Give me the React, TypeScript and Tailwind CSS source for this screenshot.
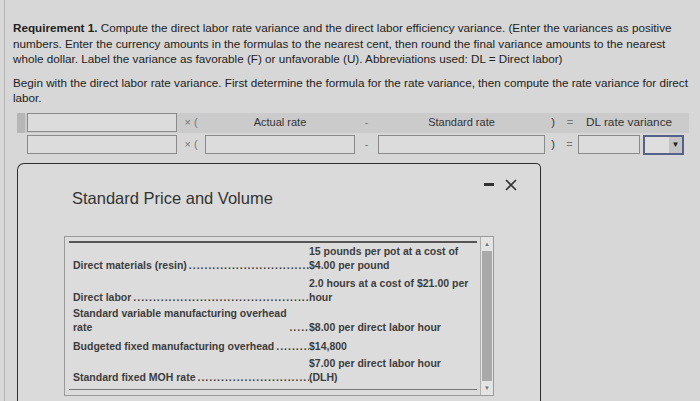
import React from 'react';

const Dots: React.FC = () => (
  <span className="flex-1 overflow-hidden whitespace-nowrap tracking-[1px] ml-[2px]">
    ..................................................................................
  </span>
);

const InputBox: React.FC<{ w: string }> = ({ w }) => (
  <div className={`${w} h-[19px] border border-[#8a8a8a] bg-[#dcdcdc]`} />
);

const App: React.FC = () => {
  return (
    <div
      className="w-[700px] h-[401px] overflow-hidden bg-[#d7d7d7] text-[#222]"
      style={{ fontFamily: '"Liberation Sans", Arial, sans-serif' }}
    >
      <div className="h-full ml-[4px] border-l border-[#b5b5b5] pl-[8px] pt-[20px]">
        <p className="text-[11.7px] leading-[15.5px]">
          <span className="font-bold">Requirement 1.</span> Compute the direct labor rate variance and the direct labor efficiency variance. (Enter the variances as positive
          <br />
          numbers. Enter the currency amounts in the formulas to the nearest cent, then round the final variance amounts to the nearest
          <br />
          whole dollar. Label the variance as favorable (F) or unfavorable (U). Abbreviations used: DL = Direct labor)
        </p>
        <p className="text-[11.7px] leading-[15px] mt-[8px]">
          Begin with the direct labor rate variance. First determine the formula for the rate variance, then compute the rate variance for direct
          <br />
          labor.
        </p>

        {/* formula rows */}
        <div className="mt-[8px] ml-[4px] w-[672px] text-[11px] text-[#333]">
          <div className="flex items-center h-[20px] bg-[#cbcbcb]">
            <div className="w-[8px] h-full bg-[#b6b6b6]" />
            <div className="ml-[2px]">
              <InputBox w="w-[150px]" />
            </div>
            <span className="w-[28px] text-center text-[#777]">× (</span>
            <span className="w-[150px] text-center">Actual rate</span>
            <span className="w-[23px] text-center text-[#777]">-</span>
            <span className="w-[167px] text-center">Standard rate</span>
            <span className="w-[16px] text-center">)</span>
            <span className="w-[18px] text-center text-[#777]">=</span>
            <span className="ml-[7px] text-[11.8px]">DL rate variance</span>
          </div>
          <div className="flex items-center h-[20px] mt-[2px]">
            <div className="w-[8px]" />
            <div className="ml-[2px]">
              <InputBox w="w-[150px]" />
            </div>
            <span className="w-[28px] text-center text-[#777]">× (</span>
            <InputBox w="w-[150px]" />
            <span className="w-[23px] text-center text-[#777]">-</span>
            <InputBox w="w-[167px]" />
            <span className="w-[16px] text-center">)</span>
            <span className="w-[17px] text-center text-[#777]">=</span>
            <InputBox w="w-[62px]" />
            <div className="ml-[3px] w-[41px] h-[20px] border-2 border-[#56608a] bg-[#dedede] flex justify-end">
              <div className="w-[13px] h-full bg-[#c4c4c4] flex items-center justify-center text-[8px] text-[#222]">
                ▼
              </div>
            </div>
          </div>
        </div>

        {/* dialog */}
        <div className="mt-[8px] ml-[4px] w-[524px] h-[260px] border-[1.5px] border-b-0 border-[#2e2e2e] rounded-tl-[7px] rounded-tr-[5px] bg-[#dadada]">
          <div className="flex justify-between items-start">
            <h2 className="pl-[54px] pt-[22px] text-[16.5px] text-[#333]">Standard Price and Volume</h2>
            <div className="flex items-center gap-[10px] pt-[14px] pr-[22px] text-[#333]">
              <div className="w-[10px] h-[3px] bg-[#333]" />
              <svg width="14" height="14" viewBox="0 0 14 14">
                <path d="M2 2 L12 12 M12 2 L2 12" stroke="#333" strokeWidth="1.6" />
              </svg>
            </div>
          </div>

          <div className="mt-[26px] ml-[46px] w-[430px] h-[160px] border border-[#9a9a9a] bg-[#dcdcdc] flex">
            <div className="flex-1 pl-[4px] pr-[3px] pt-[4px]">
              <div className="h-[2px] bg-[#555]" />
              <div className="pl-[4px] pr-[2px] text-[10.5px] leading-[14px] font-bold text-[#3c3c3c]">
                <div className="flex items-end mt-[1px]">
                  <div className="w-[236px] flex">
                    <span>Direct materials (resin)</span>
                    <Dots />
                  </div>
                  <div className="flex-1">
                    15 pounds per pot at a cost of
                    <br />
                    $4.00 per pound
                  </div>
                </div>
                <div className="flex items-end mt-[4px]">
                  <div className="w-[236px] flex">
                    <span>Direct labor</span>
                    <Dots />
                  </div>
                  <div className="flex-1">
                    2.0 hours at a cost of $21.00 per
                    <br />
                    hour
                  </div>
                </div>
                <div className="flex items-end mt-[2px]">
                  <div className="w-[236px]">
                    <div>Standard variable manufacturing overhead</div>
                    <div className="flex">
                      <span className="flex-1">rate</span>
                      <span className="tracking-[1px]">.....</span>
                    </div>
                  </div>
                  <div className="flex-1">$8.00 per direct labor hour</div>
                </div>
                <div className="flex items-end mt-[5px]">
                  <div className="w-[236px] flex">
                    <span>Budgeted fixed manufacturing overhead</span>
                    <Dots />
                  </div>
                  <div className="flex-1">$14,800</div>
                </div>
                <div className="flex items-end mt-[3px]">
                  <div className="w-[236px] flex">
                    <span>Standard fixed MOH rate</span>
                    <Dots />
                  </div>
                  <div className="flex-1">
                    $7.00 per direct labor hour
                    <br />
                    (DLH)
                  </div>
                </div>
              </div>
              <div className="mt-[5px] h-[1px] bg-[#777]" />
            </div>
            <div className="w-[13px] border-l border-[#b0b0b0] bg-[#e4e4e4] flex flex-col items-center">
              <div className="h-[14px] flex items-center justify-center text-[6px] text-[#777]">▲</div>
              <div className="flex-1 w-[10px] bg-[#a9a9a9]" />
              <div className="h-[14px] flex items-center justify-center text-[6px] text-[#777]">▼</div>
            </div>
          </div>
        </div>
      </div>
    </div>
  );
};

export default App;
